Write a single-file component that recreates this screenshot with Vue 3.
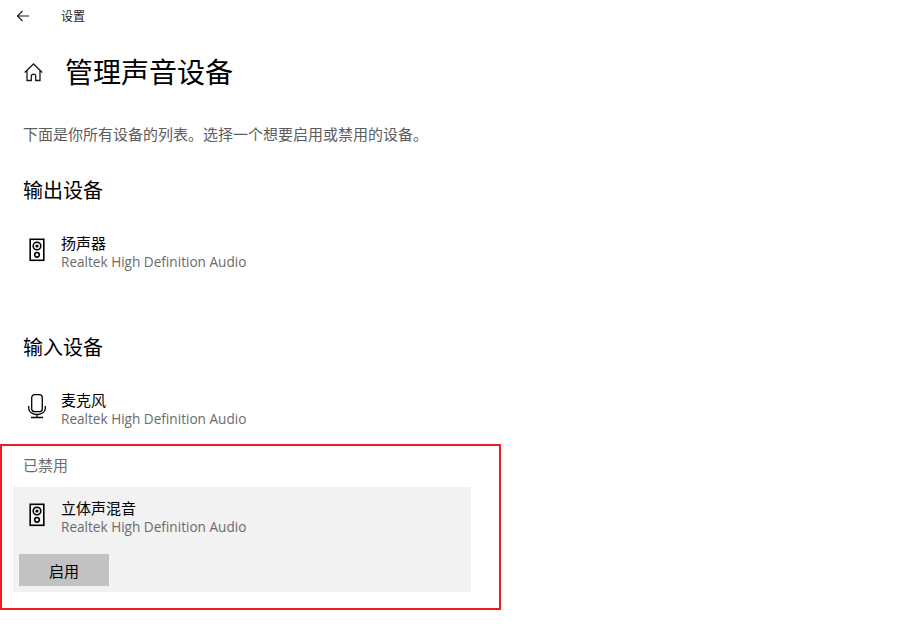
<script setup>
const devices = {
  speaker: 'Realtek High Definition Audio'
}
</script>

<template>
  <div class="page">
    <header class="topbar">
      <svg class="back" width="16" height="16" viewBox="0 0 16 16" fill="none" stroke="#1a1a1a" stroke-width="1.1">
        <path d="M14 8H2.5M7.5 3 2.5 8l5 5" />
      </svg>
      <span class="app-name">设置</span>
    </header>

    <div class="title-row">
      <svg class="home" width="21" height="21" viewBox="0 0 21 21" fill="none" stroke="#1a1a1a" stroke-width="1.3">
        <path d="M1.7 10.5 10.5 2l8.8 8.5M4 8.5v10h4.3v-4.2a2.2 2.2 0 0 1 4.4 0v4.2H17v-10" />
      </svg>
      <h1>管理声音设备</h1>
    </div>

    <p class="desc">下面是你所有设备的列表。选择一个想要启用或禁用的设备。</p>

    <h2 class="out-h">输出设备</h2>
    <div class="device">
      <svg class="dev-icon" width="18" height="26" viewBox="0 0 18 26" fill="none" stroke="#000" stroke-width="1.6">
        <rect x="2.2" y="2.3" width="13.6" height="21" />
        <circle cx="9" cy="9" r="3.8" />
        <circle cx="9" cy="9" r="0.8" />
        <circle cx="9" cy="17.8" r="2.3" />
      </svg>
      <div class="dev-text">
        <div class="dev-name">扬声器</div>
        <div class="dev-sub">{{ devices.speaker }}</div>
      </div>
    </div>

    <h2 class="in-h">输入设备</h2>
    <div class="device">
      <svg class="dev-icon" width="18" height="26" viewBox="0 0 18 26" fill="none" stroke="#000" stroke-width="1.3">
        <rect x="3.7" y="0.7" width="10.6" height="17" rx="3" />
        <path d="M0.7 12v2.5a8.3 6 0 0 0 16.6 0V12M9 20.5v3M3 23.5h12" />
      </svg>
      <div class="dev-text">
        <div class="dev-name">麦克风</div>
        <div class="dev-sub">{{ devices.speaker }}</div>
      </div>
    </div>

    <div class="disabled-label">已禁用</div>
    <section class="panel">
      <div class="device panel-device">
        <svg class="dev-icon" width="18" height="26" viewBox="0 0 18 26" fill="none" stroke="#000" stroke-width="1.6">
          <rect x="2.2" y="2.3" width="13.6" height="21" />
          <circle cx="9" cy="9" r="3.8" />
          <circle cx="9" cy="9" r="0.8" />
          <circle cx="9" cy="17.8" r="2.3" />
        </svg>
        <div class="dev-text">
          <div class="dev-name">立体声混音</div>
          <div class="dev-sub">{{ devices.speaker }}</div>
        </div>
      </div>
      <button class="enable">启用</button>
    </section>

    <div class="highlight"></div>
  </div>
</template>

<style>
html, body { margin: 0; background: #fff; }
</style>

<style scoped>
.page {
  position: relative;
  width: 923px;
  height: 641px;
  overflow: hidden;
  background: #fff;
  color: #000;
  font-family: "Open Sans", "Noto Sans CJK SC", sans-serif;
}
.topbar {
  display: flex;
  align-items: center;
  height: 32px;
  padding-left: 15px;
}
.back { flex: none; }
.app-name {
  margin-left: 30px;
  font-size: 12px;
  color: #1a1a1a;
}
.title-row {
  display: flex;
  align-items: center;
  height: 40px;
  margin-top: 20px;
  padding-left: 23px;
}
.home { flex: none; }
h1 {
  margin: 0 0 0 21px;
  font-size: 28px;
  font-weight: 400;
  line-height: 40px;
  color: #000;
}
.desc {
  margin: 32px 0 0 23px;
  font-size: 15px;
  line-height: 20px;
  color: #5d5d5d;
}
h2 {
  margin: 0 0 0 23px;
  font-size: 20px;
  font-weight: 400;
  line-height: 28px;
}
.out-h { margin-top: 33px; }
.in-h { margin-top: 63px; }
.device {
  display: flex;
  align-items: flex-start;
  margin: 28px 0 0 28px;
}
.dev-icon { flex: none; margin-top: 4px; }
.dev-text { margin-left: 15px; }
.dev-name {
  font-size: 15px;
  line-height: 20px;
}
.dev-sub {
  font-size: 13.6px;
  line-height: 18px;
  color: #6b6b6b;
}
.disabled-label {
  margin: 27px 0 0 23px;
  font-size: 15px;
  line-height: 20px;
  color: #6b6b6b;
}
.panel {
  display: flex;
  flex-direction: column;
  box-sizing: border-box;
  width: 458px;
  height: 105px;
  margin: 12px 0 0 13px;
  padding: 11px 6px 6px;
  background: #f2f2f2;
}
.panel-device { margin: 0 0 0 9px; }
.enable {
  width: 90px;
  height: 32px;
  margin-top: 18px;
  padding: 0;
  border: 0;
  background: #c2c2c2;
  color: #000;
  font: inherit;
  font-size: 15px;
}
.highlight {
  position: absolute;
  left: 0;
  top: 444px;
  width: 501px;
  height: 166px;
  box-sizing: border-box;
  border: 2px solid #ed1c24;
  pointer-events: none;
}
</style>
